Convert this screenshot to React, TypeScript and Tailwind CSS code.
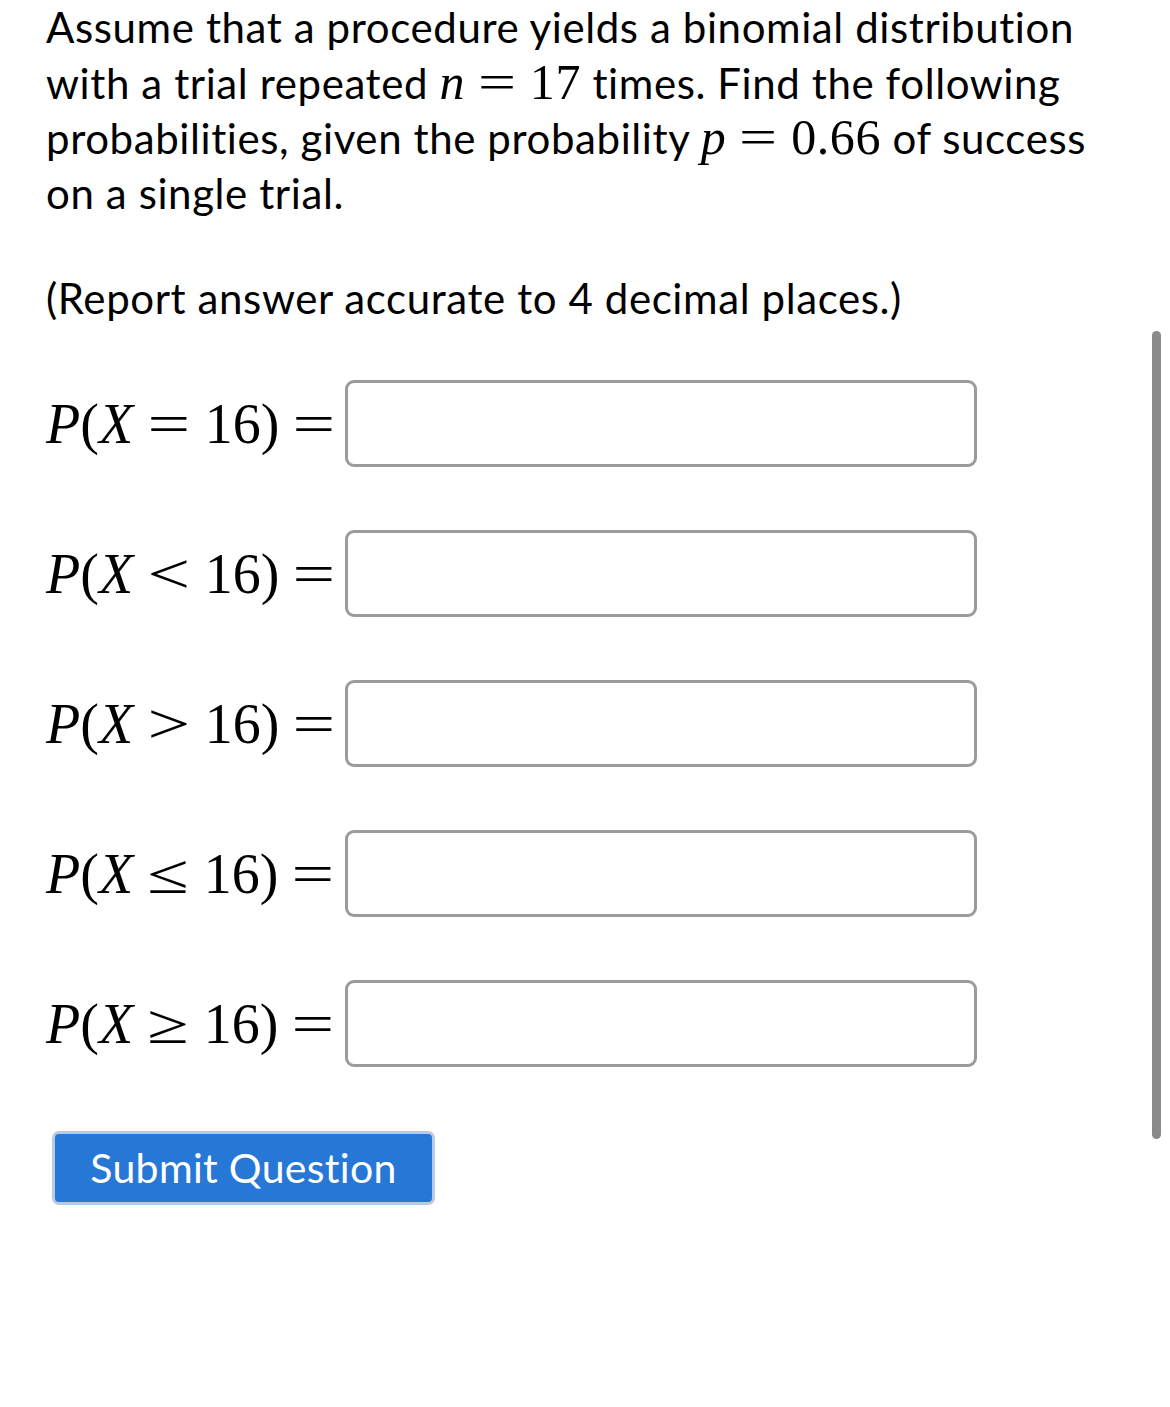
import React from "react";

const sans = "font-['Lato','Liberation_Sans',sans-serif] [font-variant-ligatures:none]";
const serif = "font-['Liberation_Serif','DejaVu_Serif',serif]";

function M({ children }: { children: React.ReactNode }) {
  return <span className={`${serif} text-[50px]`}>{children}</span>;
}

function I({ children }: { children: React.ReactNode }) {
  return <span className="italic">{children}</span>;
}

// MathJax draws a wider relation sign than Times does
function Rel({ children, className = "mx-[18px]" }: { children: React.ReactNode; className?: string }) {
  return <span className={`inline-block scale-x-[1.35] ${className}`}>{children}</span>;
}

const rows = ["=", "<", ">", "≤", "≥"];

export default function App() {
  return (
    <div className={`relative min-h-[1407px] w-[1170px] bg-white text-black ${sans}`}>
      {/* scroll indicator */}
      <div className="absolute left-[1152px] top-[331px] h-[808px] w-[9px] rounded-full bg-[#8a8a8a]" />

      <div className="px-[46px]">
        <p className="text-[42px] leading-[54.5px] tracking-[0.6px]">
          Assume that a procedure yields a binomial distribution
          <br />
          with a trial repeated{" "}
          <M>
            <I>n</I>
            <Rel>=</Rel>
            17
          </M>{" "}
          times. Find the following
          <br />
          probabilities, given the probability{" "}
          <M>
            <I>p</I>
            <Rel>=</Rel>
            0.66
          </M>{" "}
          of success
          <br />
          on a single trial.
        </p>

        <p className="mt-[51px] text-[42px] leading-[54px] tracking-[0.6px]">
          (Report answer accurate to 4 decimal places.)
        </p>

        <div className="mt-[55px] flex flex-col gap-[63px]">
          {rows.map((op) => (
            <div key={op} className="flex items-center">
              <div className={`${serif} w-[299px] whitespace-nowrap text-[56px] leading-none`}>
                <I>P</I>(<I>X</I>
                <Rel className="mx-[20px]">{op}</Rel>16)
                <Rel className="ml-[19px]">=</Rel>
              </div>
              <input
                type="text"
                className="h-[87px] w-[632px] rounded-[9px] border-[3px] border-[#9b9b9b] bg-white px-3 text-[36px] outline-none"
              />
            </div>
          ))}
        </div>

        <button
          type="button"
          className="mt-[64px] ml-[6px] flex h-[74px] w-[383px] items-center justify-center rounded-[7px] border-[3px] border-[#b9cbe2] bg-[#2777d6] text-[41px] tracking-[0.3px] text-white"
        >
          Submit Question
        </button>
      </div>
    </div>
  );
}
